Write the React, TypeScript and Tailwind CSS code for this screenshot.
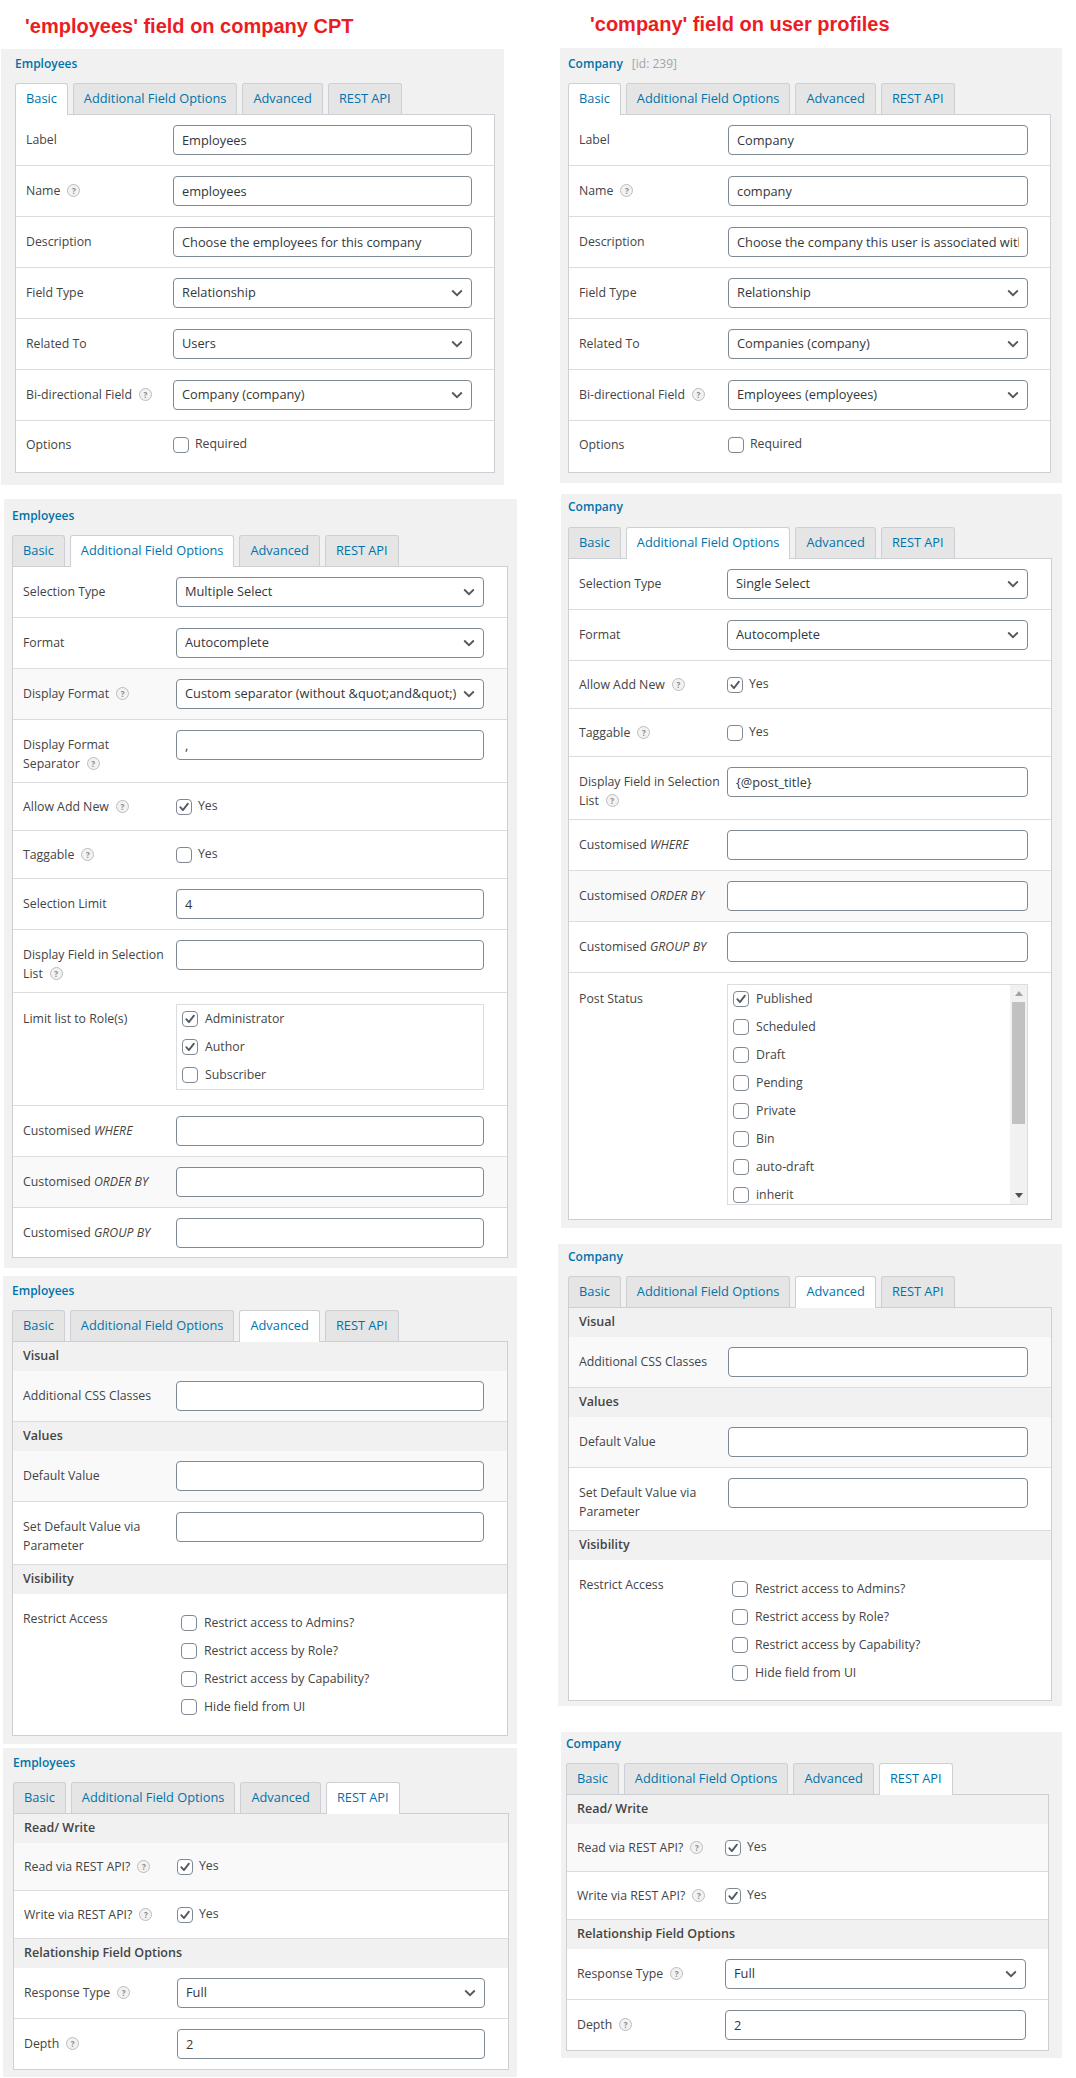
import React, { createContext, useContext, type ReactNode } from 'react';

// Per-panel label column width and right gutter of the rows.
type Dims = { lw: string; pr: string };
const DimCtx = createContext<Dims>({ lw: 'w-[163px]', pr: 'pr-[23px]' });

const TABS = ['Basic', 'Additional Field Options', 'Advanced', 'REST API'];

function Help() {
  return (
    <span className="ml-[7px] inline-flex h-[13px] w-[13px] -translate-y-px items-center justify-center rounded-full border border-[#bcbcbc] bg-[#f2f2f2] align-middle text-[8px] font-bold leading-none text-[#8a8a8a]">
      ?
    </span>
  );
}

function Box({ checked }: { checked?: boolean }) {
  return (
    <span className="flex h-[16px] w-[16px] shrink-0 items-center justify-center rounded-[4px] border border-[#7e8993] bg-white">
      {checked && (
        <svg width="12" height="12" viewBox="0 0 12 12">
          <path d="M2.3 6.2 4.9 9.1 9.9 2.6" fill="none" stroke="#50575e" strokeWidth="1.8" strokeLinecap="round" strokeLinejoin="round" />
        </svg>
      )}
    </span>
  );
}

function Check({ label, checked, gap = 'gap-[6px]' }: { label: string; checked?: boolean; gap?: string }) {
  return (
    <div className={`flex items-center ${gap} text-[12.3px] text-[#444]`}>
      <Box checked={checked} />
      <span>{label}</span>
    </div>
  );
}

function TextInput({ value = '' }: { value?: string }) {
  return (
    <input
      readOnly
      value={value}
      className="block h-[30px] w-full rounded-[4px] border border-[#7e8993] bg-white px-[8px] text-[12.8px] text-[#32373c] outline-none"
    />
  );
}

function Select({ value }: { value: string }) {
  return (
    <div className="flex h-[30px] w-full items-center rounded-[4px] border border-[#7e8993] bg-white pl-[8px] pr-[8px] text-[12.8px] text-[#32373c]">
      <span className="flex-1 overflow-hidden whitespace-nowrap">{value}</span>
      <svg width="12" height="8" viewBox="0 0 12 8" className="ml-[4px] shrink-0">
        <path d="M1.2 1.5 6 6.2 10.8 1.5" fill="none" stroke="#50575e" strokeWidth="1.8" />
      </svg>
    </div>
  );
}

function Row({
  label,
  help,
  shade,
  cls = 'py-[10px]',
  children,
}: {
  label: ReactNode;
  help?: boolean;
  shade?: boolean;
  cls?: string;
  children?: ReactNode;
}) {
  const { lw, pr } = useContext(DimCtx);
  return (
    <div className={`flex shrink-0 border-b border-[#dcdcde] last:border-b-0 ${pr} ${cls} ${shade ? 'bg-[#f9f9f9]' : ''}`}>
      <div className={`${lw} shrink-0 pl-[10px] pt-[5px] text-[12.3px] leading-[19px] text-[#444]`}>
        {label}
        {help && <Help />}
      </div>
      <div className="min-w-0 flex-1">{children}</div>
    </div>
  );
}

function CheckRow({ label, help, checked, shade, text = 'Yes' }: { label: ReactNode; help?: boolean; checked?: boolean; shade?: boolean; text?: string }) {
  return (
    <Row label={label} help={help} shade={shade} cls="py-[9px]">
      <div className="flex h-[29px] items-center">
        <Check label={text} checked={checked} />
      </div>
    </Row>
  );
}

function Section({ children }: { children: ReactNode }) {
  return (
    <div className="flex h-[29px] shrink-0 items-center bg-[#f1f1f1] pl-[10px] text-[12.5px] font-semibold text-[#444]">
      {children}
    </div>
  );
}

function Tabs({ active }: { active: string }) {
  return (
    <div className="flex items-end gap-[5px]">
      {TABS.map(t =>
        t === active ? (
          <div
            key={t}
            className="relative z-10 -mb-px flex h-[32px] items-center rounded-t-[3px] border border-b-0 border-[#ccd0d4] bg-white px-[10px] pb-px text-[12.8px] text-[#0073aa]"
          >
            {t}
          </div>
        ) : (
          <div
            key={t}
            className="flex h-[31px] items-center rounded-t-[3px] border border-b-0 border-[#ccd0d4] bg-[#e5e5e5] px-[10px] text-[12.8px] text-[#0073aa]"
          >
            {t}
          </div>
        )
      )}
    </div>
  );
}

function Panel({
  outer,
  head,
  title,
  id,
  active,
  lw,
  pr,
  children,
}: {
  outer: string;
  head: string;
  title: string;
  id?: string;
  active: string;
  lw: string;
  pr: string;
  children: ReactNode;
}) {
  return (
    <section className={`flex shrink-0 flex-col bg-[#f1f1f1] ${outer}`}>
      <div className={`shrink-0 leading-[20px] ${head}`}>
        <span className="text-[12px] font-semibold text-[#0073aa]">{title}</span>
        {id && <span className="ml-[9px] text-[12px] text-[#a0a5aa]">[id: {id}]</span>}
      </div>
      <Tabs active={active} />
      <div className="flex min-h-0 flex-1 flex-col overflow-hidden border border-[#ccd0d4] bg-white">
        <DimCtx.Provider value={{ lw, pr }}>{children}</DimCtx.Provider>
      </div>
    </section>
  );
}

function CheckList({ items, indent }: { items: { label: string; checked?: boolean }[]; indent: string }) {
  return (
    <div className={`mt-[5px] ${indent}`}>
      {items.map(it => (
        <div key={it.label} className="flex h-[28px] items-center">
          <Check label={it.label} checked={it.checked} gap="gap-[7px]" />
        </div>
      ))}
    </div>
  );
}

const RESTRICT = [
  { label: 'Restrict access to Admins?' },
  { label: 'Restrict access by Role?' },
  { label: 'Restrict access by Capability?' },
  { label: 'Hide field from UI' },
];

const STATUSES = ['Published', 'Scheduled', 'Draft', 'Pending', 'Private', 'Bin', 'auto-draft', 'inherit'];

function StatusList() {
  return (
    <div className="flex h-[221px] border border-[#dcdcde] bg-white">
      <div className="flex-1 overflow-hidden pl-[5px]">
        {STATUSES.map((s, i) => (
          <div key={s} className="flex h-[28px] items-center">
            <Check label={s} checked={i === 0} gap="gap-[7px]" />
          </div>
        ))}
      </div>
      <div className="flex w-[17px] shrink-0 flex-col bg-[#f1f1f1]">
        <div className="flex h-[17px] items-center justify-center">
          <svg width="8" height="5" viewBox="0 0 8 5">
            <path d="M0 5 4 0 8 5Z" fill="#a3a3a3" />
          </svg>
        </div>
        <div className="flex-1 px-[2px]">
          <div className="h-[122px] bg-[#c1c1c1]" />
        </div>
        <div className="flex h-[17px] items-center justify-center">
          <svg width="8" height="5" viewBox="0 0 8 5">
            <path d="M0 0 4 5 8 0Z" fill="#505050" />
          </svg>
        </div>
      </div>
    </div>
  );
}

function Heading({ children, cls }: { children: ReactNode; cls: string }) {
  return (
    <div className={`shrink-0 font-['Liberation_Sans',Arial,sans-serif] text-[20px] font-bold leading-[23px] text-[#ec1c24] ${cls}`}>
      {children}
    </div>
  );
}

const CUSTOM_SEP = 'Custom separator (without &quot;and&quot;)';

export default function App() {
  return (
    <div className="flex min-h-[2078px] w-[1076px] bg-white font-['Open_Sans',sans-serif] text-[#444]">
      {/* Left: employees field on the company CPT */}
      <div className="flex w-[540px] shrink-0 flex-col">
        <Heading cls="h-[49px] pl-[25px] pt-[15px]">'employees' field on company CPT</Heading>

        <Panel outer="ml-[1px] w-[503px] h-[436px] pl-[14px] pr-[9px] pb-[12px]" head="h-[34px] pt-[3px]" title="Employees" active="Basic" lw="w-[157px]" pr="pr-[22px]">
          <Row label="Label"><TextInput value="Employees" /></Row>
          <Row label="Name" help><TextInput value="employees" /></Row>
          <Row label="Description"><TextInput value="Choose the employees for this company" /></Row>
          <Row label="Field Type"><Select value="Relationship" /></Row>
          <Row label="Related To"><Select value="Users" /></Row>
          <Row label="Bi-directional Field" help><Select value="Company (company)" /></Row>
          <CheckRow label="Options" text="Required" />
        </Panel>

        <Panel outer="ml-[4px] mt-[14px] w-[513px] h-[769px] pl-[8px] pr-[9px] pb-[10px]" head="h-[36px] pt-[5px]" title="Employees" active="Additional Field Options" lw="w-[163px]" pr="pr-[23px]">
          <Row label="Selection Type"><Select value="Multiple Select" /></Row>
          <Row label="Format"><Select value="Autocomplete" /></Row>
          <Row label="Display Format" help shade><Select value={CUSTOM_SEP} /></Row>
          <Row label={<>Display Format<br />Separator<Help /></>} cls="pt-[10px] pb-[9px]"><TextInput value="," /></Row>
          <CheckRow label="Allow Add New" help checked />
          <CheckRow label="Taggable" help />
          <Row label="Selection Limit"><TextInput value="4" /></Row>
          <Row label={<>Display Field in Selection<br />List<Help /></>} cls="pt-[10px] pb-[9px]"><TextInput /></Row>
          <Row label="Limit list to Role(s)" cls="pt-[11px] pb-[15px]">
            <div className="border border-[#dcdcde] pl-[5px]">
              {[
                { label: 'Administrator', checked: true },
                { label: 'Author', checked: true },
                { label: 'Subscriber' },
              ].map(it => (
                <div key={it.label} className="flex h-[28px] items-center">
                  <Check label={it.label} checked={it.checked} gap="gap-[7px]" />
                </div>
              ))}
            </div>
          </Row>
          <Row label={<>Customised <i>WHERE</i></>}><TextInput /></Row>
          <Row label={<>Customised <i>ORDER BY</i></>} shade><TextInput /></Row>
          <Row label={<>Customised <i>GROUP BY</i></>}><TextInput /></Row>
        </Panel>

        <Panel outer="ml-[3px] mt-[8px] w-[514px] h-[468px] pl-[9px] pr-[9px] pb-[8px]" head="h-[34px] pt-[3px]" title="Employees" active="Advanced" lw="w-[163px]" pr="pr-[23px]">
          <Section>Visual</Section>
          <Row label="Additional CSS Classes" shade><TextInput /></Row>
          <Section>Values</Section>
          <Row label="Default Value" shade><TextInput /></Row>
          <Row label={<>Set Default Value via<br />Parameter</>} cls="pt-[10px] pb-[9px]"><TextInput /></Row>
          <Section>Visibility</Section>
          <Row label="Restrict Access" cls="pt-[10px] pb-[14px]">
            <CheckList items={RESTRICT} indent="ml-[5px]" />
          </Row>
        </Panel>

        <Panel outer="ml-[3px] mt-[4px] w-[514px] h-[329px] pl-[10px] pr-[8px] pb-[7px]" head="h-[34px] pt-[3px]" title="Employees" active="REST API" lw="w-[163px]" pr="pr-[23px]">
          <Section>Read/ Write</Section>
          <CheckRow label="Read via REST API?" help checked shade />
          <CheckRow label="Write via REST API?" help checked />
          <Section>Relationship Field Options</Section>
          <Row label="Response Type" help><Select value="Full" /></Row>
          <Row label="Depth" help><TextInput value="2" /></Row>
        </Panel>
      </div>

      {/* Right: company field on user profiles */}
      <div className="flex w-[536px] shrink-0 flex-col">
        <Heading cls="h-[48px] pl-[50px] pt-[13px]">'company' field on user profiles</Heading>

        <Panel outer="ml-[20px] w-[502px] h-[435px] pl-[8px] pr-[11px] pb-[10px]" head="h-[35px] pt-[4px]" title="Company" id="239" active="Basic" lw="w-[159px]" pr="pr-[22px]">
          <Row label="Label"><TextInput value="Company" /></Row>
          <Row label="Name" help><TextInput value="company" /></Row>
          <Row label="Description"><TextInput value="Choose the company this user is associated with" /></Row>
          <Row label="Field Type"><Select value="Relationship" /></Row>
          <Row label="Related To"><Select value="Companies (company)" /></Row>
          <Row label="Bi-directional Field" help><Select value="Employees (employees)" /></Row>
          <CheckRow label="Options" text="Required" />
        </Panel>

        <Panel outer="ml-[21px] mt-[11px] w-[501px] h-[734px] pl-[7px] pr-[10px] pb-[8px]" head="h-[33px] pt-[1px]" title="Company" active="Additional Field Options" lw="w-[158px]" pr="pr-[23px]">
          <Row label="Selection Type"><Select value="Single Select" /></Row>
          <Row label="Format"><Select value="Autocomplete" /></Row>
          <CheckRow label="Allow Add New" help checked />
          <CheckRow label="Taggable" help />
          <Row label={<>Display Field in Selection<br />List<Help /></>} cls="pt-[10px] pb-[9px]"><TextInput value="{@post_title}" /></Row>
          <Row label={<>Customised <i>WHERE</i></>}><TextInput /></Row>
          <Row label={<>Customised <i>ORDER BY</i></>} shade><TextInput /></Row>
          <Row label={<>Customised <i>GROUP BY</i></>}><TextInput /></Row>
          <Row label="Post Status" cls="pt-[11px] pb-[15px]">
            <StatusList />
          </Row>
        </Panel>

        <Panel outer="ml-[18px] mt-[16px] w-[504px] h-[462px] pl-[10px] pr-[10px] pb-[5px]" head="h-[32px] pt-[1px]" title="Company" active="Advanced" lw="w-[159px]" pr="pr-[23px]">
          <Section>Visual</Section>
          <Row label="Additional CSS Classes" shade><TextInput /></Row>
          <Section>Values</Section>
          <Row label="Default Value" shade><TextInput /></Row>
          <Row label={<>Set Default Value via<br />Parameter</>} cls="pt-[10px] pb-[9px]"><TextInput /></Row>
          <Section>Visibility</Section>
          <Row label="Restrict Access" cls="pt-[10px] pb-[14px]">
            <CheckList items={RESTRICT} indent="ml-[4px]" />
          </Row>
        </Panel>

        <Panel outer="ml-[21px] mt-[26px] w-[501px] h-[326px] pl-[5px] pr-[13px] pb-[7px]" head="h-[31px] pt-0" title="Company" active="REST API" lw="w-[158px]" pr="pr-[22px]">
          <Section>Read/ Write</Section>
          <CheckRow label="Read via REST API?" help checked shade />
          <CheckRow label="Write via REST API?" help checked />
          <Section>Relationship Field Options</Section>
          <Row label="Response Type" help><Select value="Full" /></Row>
          <Row label="Depth" help><TextInput value="2" /></Row>
        </Panel>
      </div>
    </div>
  );
}
